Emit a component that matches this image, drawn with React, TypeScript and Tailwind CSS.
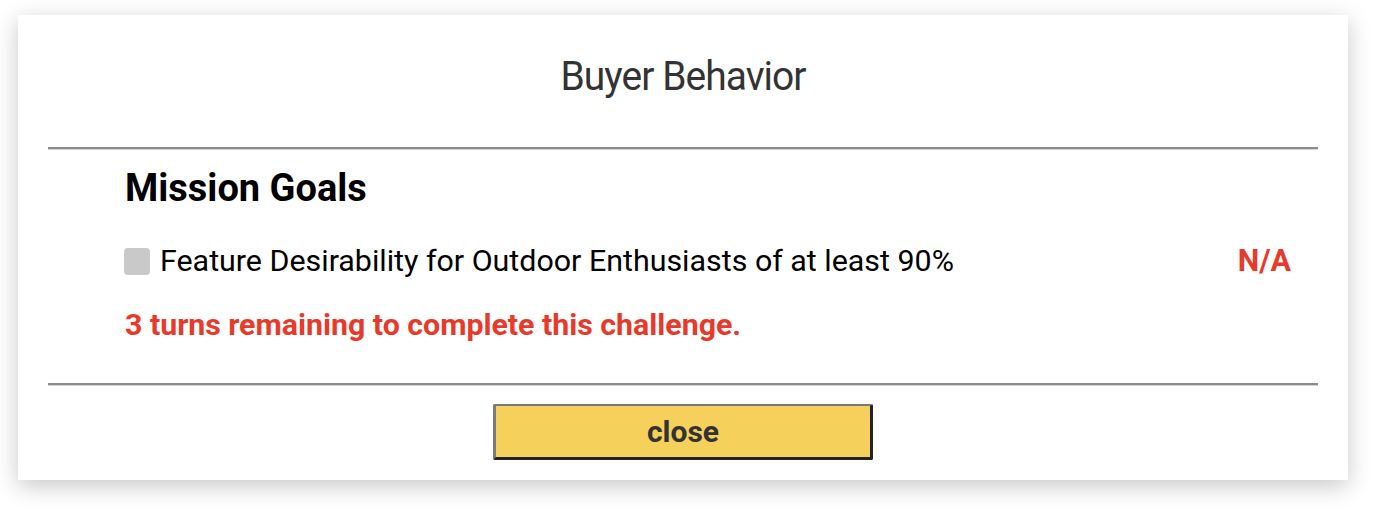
import React from "react";

const roboto = { fontFamily: "Roboto, 'Liberation Sans', sans-serif" };

function Divider() {
  return (
    <div className="mx-[30px] h-[3px] border-t-2 border-t-[#8c8c8c] border-b border-b-[#d4d4d4]" />
  );
}

export default function App() {
  return (
    <div className="w-[1392px] h-[512px] bg-white pt-[15px] pl-[18px]">
      <div className="w-[1330px] h-[465px] bg-white shadow-[0_6px_22px_rgba(0,0,0,0.22)] flex flex-col">
        <div className="h-[132px] flex items-center justify-center pb-[8px]">
          <h1 className="text-[41px] text-[#333] font-normal tracking-[-1px] scale-x-[0.95]" style={roboto}>
            Buyer Behavior
          </h1>
        </div>
        <Divider />
        <div className="pl-[106px] pr-[57px] h-[233px]">
          <h2 className="mt-[14px] ml-[1px] text-[38px] font-bold text-black leading-[48px]" style={roboto}>
            Mission Goals
          </h2>
          <div className="mt-[34px] flex items-center h-[30px]">
            <span className="w-[26px] h-[27px] rounded-[4px] bg-[#c9c9c9] mr-[10px] shrink-0" />
            <span className="text-[30.4px] text-black flex-1 leading-[30px]" style={roboto}>
              Feature Desirability for Outdoor Enthusiasts of at least 90%
            </span>
            <span className="text-[30.5px] font-bold text-[#e8392a] leading-[30px]" style={roboto}>
              N/A
            </span>
          </div>
          <p className="mt-[32px] ml-[1px] text-[30.3px] font-bold text-[#e8392a] leading-[34px]" style={roboto}>
            3 turns remaining to complete this challenge.
          </p>
        </div>
        <Divider />
        <div className="flex justify-center mt-[18px]">
          <button
            className="w-[380px] h-[56px] bg-[#f5d15c] border-t-2 border-l-[3px] border-b-[3px] border-r-[3px] border-t-[#7a7a7a] border-l-[#7a7a7a] border-b-[#222] border-r-[#222] rounded-[2px] text-[30px] font-bold text-[#333] flex items-center justify-center"
            style={roboto}
          >
            close
          </button>
        </div>
      </div>
    </div>
  );
}
